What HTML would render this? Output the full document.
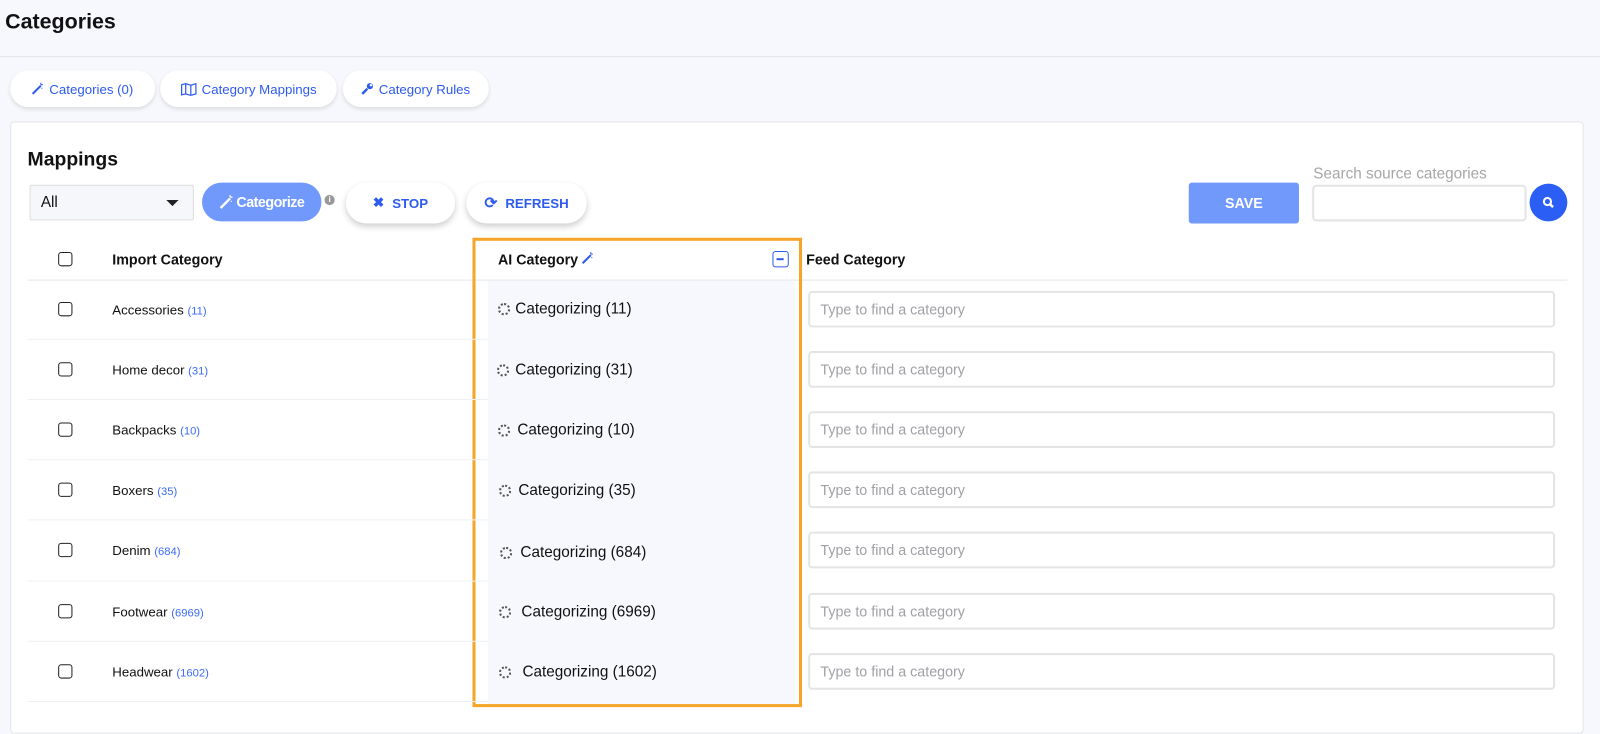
<!DOCTYPE html>
<html><head><meta charset="utf-8"><style>
*{box-sizing:border-box;margin:0;padding:0}
html,body{width:1600px;height:708px;overflow:hidden;background:#f7f8fd}
#w{position:absolute;left:0;top:0;width:1568px;height:694px;transform:scale(1.0204);transform-origin:0 0;font-family:"Liberation Sans",Arial,sans-serif;color:#111}
.a{position:absolute}
.hdr{left:0;top:0;width:1568px;height:56px;border-bottom:1px solid #e2e3e8}
.h1{left:5px;top:10px;font-size:21px;font-weight:bold}
.tab{top:69px;height:36px;background:#fff;border-radius:18px;box-shadow:0 2px 4px rgba(0,0,0,.12);color:#2d5bf0;font-size:13px;display:flex;align-items:center;justify-content:center;gap:5px}
.card{left:10px;top:119px;width:1542px;height:600px;background:#fff;border:1px solid #e4e5ea;border-radius:4px}
.t{font-size:13px;white-space:nowrap}
.cb{width:14px;height:14px;border:1.6px solid #222;border-radius:3px;background:#fff}
.line{height:1px;background:#eef0f3}
.inp{left:792px;width:732px;height:36px;border:2px solid #e3e4e6;border-radius:4px;font-size:14px;color:#a0a0a6;padding:8px 10px}
.cnt{color:#3b6bf5;font-size:11px}
.btnw{top:179px;height:40px;background:#fff;border-radius:20px;box-shadow:0 3px 6px rgba(0,0,0,.2);color:#2d5bf0;font-weight:bold;font-size:13px;display:flex;align-items:center;justify-content:center;gap:8px}
.sp{width:12px;height:12px;border:2px dotted #555;border-radius:50%}
</style></head><body><div id="w">
<div class="a hdr"></div>
<div class="a h1">Categories</div>
<div class="a tab" style="left:10px;width:142px"><svg width="12" height="12" viewBox="0 0 12 12"><path d="M1 11L9 3" stroke="#2d5bf0" stroke-width="2"/><path d="M9 0v2M11 2h-2M10 5v1" stroke="#2d5bf0"/></svg>Categories (0)</div>
<div class="a tab" style="left:157px;width:173px"><svg width="16" height="13" viewBox="0 0 16 13"><path d="M1 2l4-1 5 1.5 5-1.5v10l-5 1.5-5-1.5-4 1z M5 1v10 M10 2.5v10" stroke="#2d5bf0" fill="none" stroke-width="1.2"/></svg>Category Mappings</div>
<div class="a tab" style="left:336px;width:143px"><svg width="12" height="12" viewBox="0 0 12 12"><path d="M1 11l5-5" stroke="#2d5bf0" stroke-width="2.4"/><circle cx="8.5" cy="3.5" r="3" fill="#2d5bf0"/><circle cx="9.5" cy="2.5" r="1.2" fill="#fff"/></svg>Category Rules</div>
<div class="a card"></div>
<div class="a" style="left:27px;top:146px;font-size:19px;font-weight:bold">Mappings</div>
<div class="a" style="left:29px;top:181px;width:161px;height:35px;border:1.5px solid #ddd;background:#f6f7fb;border-radius:2px;font-size:15px;padding:8px 10px">All<div class="a" style="right:14px;top:14px;border-left:6px solid transparent;border-right:6px solid transparent;border-top:6px solid #222"></div></div>
<div class="a" style="left:198px;top:179px;width:117px;height:38px;background:#7198fb;border-radius:19px;color:#fff;font-weight:bold;font-size:14px;display:flex;align-items:center;justify-content:center;letter-spacing:-.5px"><svg width="14" height="14" viewBox="0 0 12 12" style="margin-right:3px"><path d="M1 11L9 3" stroke="#fff" stroke-width="2"/><path d="M9 0v2M11 2h-2M10 5v1" stroke="#fff"/></svg>Categorize</div>
<div class="a" style="left:318px;top:191px;width:10px;height:10px;border-radius:50%;background:#999;color:#fff;font-size:8px;text-align:center;line-height:10px;font-weight:bold">i</div>
<div class="a btnw" style="left:339px;width:107px"><span>✖</span>STOP</div>
<div class="a btnw" style="left:457px;width:118px"><span style="font-size:15px">⟳</span>REFRESH</div>
<div class="a" style="left:1165px;top:179px;width:108px;height:40px;background:#7198fb;border-radius:3px;color:#fff;font-weight:bold;font-size:14px;display:flex;align-items:center;justify-content:center">SAVE</div>
<div class="a" style="left:1287px;top:162px;font-size:15px;color:#a6a6a6">Search source categories</div>
<div class="a" style="left:1286px;top:181px;width:210px;height:36px;border:2px solid #e3e4e6;border-radius:4px"></div>
<div class="a" style="left:1499px;top:180px;width:37px;height:37px;border-radius:50%;background:#2a5ef5"><svg width="37" height="37"><circle cx="17.5" cy="17.5" r="3.5" stroke="#fff" stroke-width="2" fill="none"/><path d="M20 20l3 3" stroke="#fff" stroke-width="2.4"/></svg></div>
<div class="a cb" style="left:57px;top:247px"></div>
<div class="a t" style="left:110px;top:246px;font-weight:bold;font-size:14px">Import Category</div>
<div class="a t" style="left:488px;top:246px;font-weight:bold;font-size:14px">AI Category <svg width="12" height="12" viewBox="0 0 12 12"><path d="M1 11L9 3" stroke="#2d5bf0" stroke-width="2"/><path d="M9 0v2M11 2h-2M10 5v1" stroke="#2d5bf0"/></svg></div>
<div class="a" style="left:757px;top:246px;width:16px;height:16px;border:1.5px solid #2d5bf0;border-radius:3px"><div class="a" style="left:3px;top:6px;width:7px;height:1.5px;background:#2d5bf0"></div></div>
<div class="a t" style="left:790px;top:246px;font-weight:bold;font-size:14px">Feed Category</div>
<div class="a line" style="left:27px;top:274px;width:1509px;background:#e4e5ea"></div>
<div class="a" style="left:478px;top:275px;width:301px;height:415px;background:#f7f8fd"></div>
<div class="a" style="left:463px;top:233px;width:323px;height:460px;border:3px solid #f5a52a"></div>

<div class="a cb" style="left:57px;top:296px"></div><div class="a t" style="left:110px;top:296px">Accessories <span class="cnt">(11)</span></div>
<div class="a sp" style="left:488px;top:297px"></div><div class="a t" style="left:505px;top:294px;font-size:15px">Categorizing (11)</div>
<div class="a inp" style="top:285px">Type to find a category</div>
<div class="a line" style="left:27px;top:332px;width:451px"></div>

<div class="a cb" style="left:57px;top:355px"></div><div class="a t" style="left:110px;top:355px">Home decor <span class="cnt">(31)</span></div>
<div class="a sp" style="left:487px;top:357px"></div><div class="a t" style="left:505px;top:354px;font-size:15px">Categorizing (31)</div>
<div class="a inp" style="top:344px">Type to find a category</div>
<div class="a line" style="left:27px;top:391px;width:451px"></div>

<div class="a cb" style="left:57px;top:414px"></div><div class="a t" style="left:110px;top:414px">Backpacks <span class="cnt">(10)</span></div>
<div class="a sp" style="left:488px;top:416px"></div><div class="a t" style="left:507px;top:413px;font-size:15px">Categorizing (10)</div>
<div class="a inp" style="top:403px">Type to find a category</div>
<div class="a line" style="left:27px;top:450px;width:451px"></div>

<div class="a cb" style="left:57px;top:473px"></div><div class="a t" style="left:110px;top:473px">Boxers <span class="cnt">(35)</span></div>
<div class="a sp" style="left:489px;top:475px"></div><div class="a t" style="left:508px;top:472px;font-size:15px">Categorizing (35)</div>
<div class="a inp" style="top:462px">Type to find a category</div>
<div class="a line" style="left:27px;top:509px;width:451px"></div>

<div class="a cb" style="left:57px;top:532px"></div><div class="a t" style="left:110px;top:532px">Denim <span class="cnt">(684)</span></div>
<div class="a sp" style="left:490px;top:536px"></div><div class="a t" style="left:510px;top:533px;font-size:15px">Categorizing (684)</div>
<div class="a inp" style="top:521px">Type to find a category</div>
<div class="a line" style="left:27px;top:569px;width:451px"></div>

<div class="a cb" style="left:57px;top:592px"></div><div class="a t" style="left:110px;top:592px">Footwear <span class="cnt">(6969)</span></div>
<div class="a sp" style="left:489px;top:594px"></div><div class="a t" style="left:511px;top:591px;font-size:15px">Categorizing (6969)</div>
<div class="a inp" style="top:581px">Type to find a category</div>
<div class="a line" style="left:27px;top:628px;width:451px"></div>

<div class="a cb" style="left:57px;top:651px"></div><div class="a t" style="left:110px;top:651px">Headwear <span class="cnt">(1602)</span></div>
<div class="a sp" style="left:489px;top:653px"></div><div class="a t" style="left:512px;top:650px;font-size:15px">Categorizing (1602)</div>
<div class="a inp" style="top:640px">Type to find a category</div>
<div class="a line" style="left:27px;top:687px;width:451px"></div>
</div></body></html>
